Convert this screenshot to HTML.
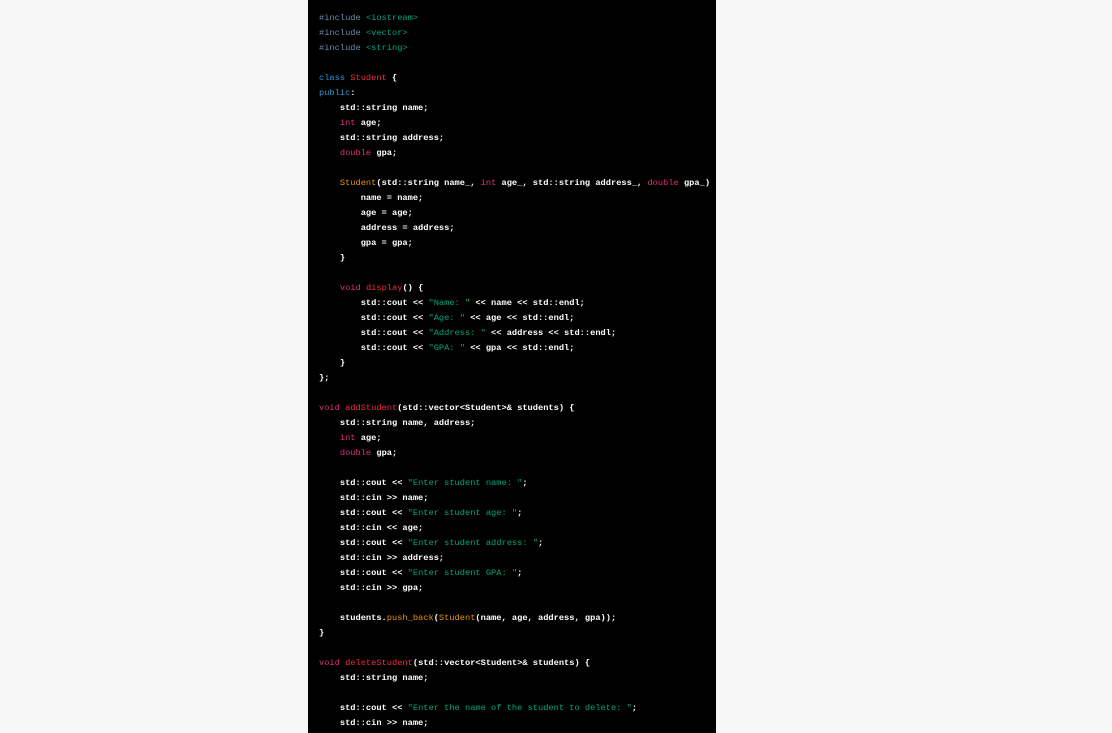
<!DOCTYPE html>
<html><head><meta charset="utf-8"><style>
html,body{margin:0;padding:0;background:#f7f7f8;width:1112px;height:733px;overflow:hidden}
.code{position:absolute;left:308px;top:0;width:408px;height:733px;background:#000;overflow:hidden}
pre{margin:0;padding:11px 0 0 11px;font-family:"Liberation Mono",monospace;font-size:8.7px;line-height:15px;color:#fff;font-weight:bold;white-space:pre}
.m{color:#6d8aa8;font-weight:normal}.k{color:#2e95d3;font-weight:normal}.s{color:#00a67d;font-weight:normal}.c{color:#f22c3d;font-weight:normal}.t{color:#df3079;font-weight:normal}.f{color:#e9950c;font-weight:normal}
</style></head><body><div class="code"><pre><span class="m">#include</span> <span class="s">&lt;iostream&gt;</span>
<span class="m">#include</span> <span class="s">&lt;vector&gt;</span>
<span class="m">#include</span> <span class="s">&lt;string&gt;</span>

<span class="k">class</span> <span class="c">Student</span> {
<span class="k">public</span>:
    std::string name;
    <span class="t">int</span> age;
    std::string address;
    <span class="t">double</span> gpa;

    <span class="f">Student</span>(std::string name_, <span class="t">int</span> age_, std::string address_, <span class="t">double</span> gpa_)
        name = name;
        age = age;
        address = address;
        gpa = gpa;
    }

    <span class="t">void</span> <span class="c">display</span>() {
        std::cout &lt;&lt; <span class="s">"Name: "</span> &lt;&lt; name &lt;&lt; std::endl;
        std::cout &lt;&lt; <span class="s">"Age: "</span> &lt;&lt; age &lt;&lt; std::endl;
        std::cout &lt;&lt; <span class="s">"Address: "</span> &lt;&lt; address &lt;&lt; std::endl;
        std::cout &lt;&lt; <span class="s">"GPA: "</span> &lt;&lt; gpa &lt;&lt; std::endl;
    }
};

<span class="t">void</span> <span class="c">addStudent</span>(std::vector&lt;Student&gt;&amp; students) {
    std::string name, address;
    <span class="t">int</span> age;
    <span class="t">double</span> gpa;

    std::cout &lt;&lt; <span class="s">"Enter student name: "</span>;
    std::cin &gt;&gt; name;
    std::cout &lt;&lt; <span class="s">"Enter student age: "</span>;
    std::cin &lt;&lt; age;
    std::cout &lt;&lt; <span class="s">"Enter student address: "</span>;
    std::cin &gt;&gt; address;
    std::cout &lt;&lt; <span class="s">"Enter student GPA: "</span>;
    std::cin &gt;&gt; gpa;

    students.<span class="f">push_back</span>(<span class="f">Student</span>(name, age, address, gpa));
}

<span class="t">void</span> <span class="c">deleteStudent</span>(std::vector&lt;Student&gt;&amp; students) {
    std::string name;

    std::cout &lt;&lt; <span class="s">"Enter the name of the student to delete: "</span>;
    std::cin &gt;&gt; name;
</pre></div></body></html>
